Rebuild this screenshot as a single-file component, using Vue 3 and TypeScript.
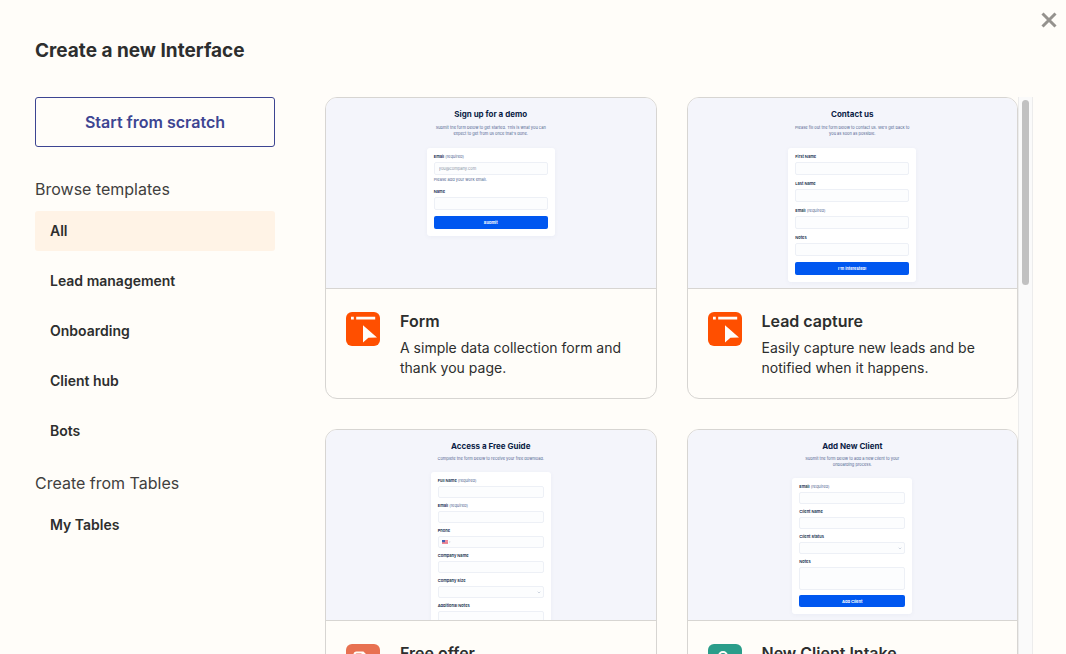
<script setup lang="ts">
import { ref } from 'vue'

type FieldKind = 'text' | 'phone' | 'select' | 'area'

interface Field {
  label: string
  required?: boolean
  kind?: FieldKind
  placeholder?: string
  help?: string
}

interface Template {
  id: string
  name: string
  description: string
  icon: 'page' | 'offer' | 'client'
  compact?: boolean
  heading: string
  intro: string[]
  fields: Field[]
  submit?: string
}

const categories: string[] = ['All', 'Lead management', 'Onboarding', 'Client hub', 'Bots']
const selected = ref<string>('All')
const thumbShare = ref<number>(33.5)

const templates: Template[] = [
  {
    id: 'form',
    name: 'Form',
    description: 'A simple data collection form and thank you page.',
    icon: 'page',
    heading: 'Sign up for a demo',
    intro: ['Submit the form below to get started. This is what you can', "expect to get from us once that's done."],
    fields: [
      { label: 'Email', required: true, placeholder: 'you@company.com', help: 'Please add your work email.' },
      { label: 'Name' },
    ],
    submit: 'Submit',
  },
  {
    id: 'lead',
    name: 'Lead capture',
    description: 'Easily capture new leads and be notified when it happens.',
    icon: 'page',
    heading: 'Contact us',
    intro: ["Please fill out the form below to contact us. We'll get back to", 'you as soon as possible.'],
    fields: [{ label: 'First Name' }, { label: 'Last Name' }, { label: 'Email', required: true }, { label: 'Notes' }],
    submit: "I'm interested!",
  },
  {
    id: 'offer',
    name: 'Free offer',
    description: '',
    icon: 'offer',
    compact: true,
    heading: 'Access a Free Guide',
    intro: ['Complete the form below to receive your free download.'],
    fields: [
      { label: 'Full Name', required: true },
      { label: 'Email', required: true },
      { label: 'Phone', kind: 'phone' },
      { label: 'Company Name' },
      { label: 'Company Size', kind: 'select' },
      { label: 'Additional Notes' },
    ],
  },
  {
    id: 'intake',
    name: 'New Client Intake',
    description: '',
    icon: 'client',
    compact: true,
    heading: 'Add New Client',
    intro: ['Submit the form below to add a new client to your', 'onboarding process.'],
    fields: [
      { label: 'Email', required: true },
      { label: 'Client Name' },
      { label: 'Client Status', kind: 'select' },
      { label: 'Notes', kind: 'area' },
    ],
    submit: 'Add Client',
  },
]
</script>

<template>
  <main class="dialog">
    <button class="close" type="button" aria-label="Close">
      <svg viewBox="0 0 16 16" width="16" height="16" aria-hidden="true">
        <path d="M1.5 1.5 14.5 14.5M14.5 1.5 1.5 14.5" fill="none" stroke="#95928e" stroke-width="3" />
      </svg>
    </button>
    <h1>Create a new Interface</h1>
    <div class="body">
      <nav class="sidebar">
        <button class="scratch" type="button">Start from scratch</button>
        <h2>Browse templates</h2>
        <ul>
          <li v-for="c in categories" :key="c">
            <button class="item" :class="{ active: c === selected }" type="button" @click="selected = c">{{ c }}</button>
          </li>
        </ul>
        <h2 class="second">Create from Tables</h2>
        <ul>
          <li><button class="item" type="button">My Tables</button></li>
        </ul>
      </nav>

      <section class="scroller">
        <div class="grid">
          <article v-for="t in templates" :key="t.id" class="card">
            <div class="preview" :class="{ compact: t.compact }">
              <h4>{{ t.heading }}</h4>
              <p class="intro"><span v-for="line in t.intro" :key="line">{{ line }}</span></p>
              <form class="mini" @submit.prevent>
                <div v-for="(f, i) in t.fields" :key="f.label" class="field">
                  <label :for="`${t.id}-${i}`">{{ f.label }} <span v-if="f.required">(required)</span></label>
                  <textarea v-if="f.kind === 'area'" :id="`${t.id}-${i}`" tabindex="-1"></textarea>
                  <div v-else-if="f.kind === 'select'" class="wrap">
                    <select :id="`${t.id}-${i}`" tabindex="-1"><option></option></select>
                    <svg class="chevron" viewBox="0 0 4 3" width="4" height="3" aria-hidden="true">
                      <path d="M.7.7 2 2 3.3.7" fill="none" stroke="#a3aec4" stroke-width=".5" />
                    </svg>
                  </div>
                  <div v-else-if="f.kind === 'phone'" class="wrap">
                    <input :id="`${t.id}-${i}`" type="tel" tabindex="-1" />
                    <svg class="flag" viewBox="0 0 9 4" width="9" height="4" aria-hidden="true">
                      <path d="M0 0h6v4H0z" fill="#f3a2ad" />
                      <path d="M0 .8h6M0 2.4h6M0 3.8h6" stroke="#e45b70" stroke-width=".5" />
                      <path d="M0 0h3v2.2H0z" fill="#4261b5" />
                      <path d="M7 1.8h1.5L7.8 2.5z" fill="#8c99b3" />
                    </svg>
                  </div>
                  <input v-else :id="`${t.id}-${i}`" type="text" :placeholder="f.placeholder" tabindex="-1" />
                  <p v-if="f.help" class="help">{{ f.help }}</p>
                </div>
                <button v-if="t.submit" class="submit" type="submit" tabindex="-1">{{ t.submit }}</button>
              </form>
            </div>
            <div class="info">
              <svg v-if="t.icon === 'page'" class="icon" viewBox="0 0 34 34" aria-hidden="true">
                <rect width="34" height="34" rx="6" fill="#ff4f00" />
                <path d="M5 4.8h2.8v2.8H5zM10.2 4.8H29.2v2.8H10.2z" fill="#fffdf9" />
                <path d="M17 13.2 31 25.4 22.4 25.8 17 30.4z" fill="#fffdf9" />
              </svg>
              <svg v-else-if="t.icon === 'offer'" class="icon" viewBox="0 0 34 34" aria-hidden="true">
                <rect width="34" height="34" rx="6" fill="#e87151" />
                <path d="M8.5 25V10.5a2 2 0 0 1 2-2H17l3.5 3.5V25zM16.5 8.5V12.5H20.5" fill="none" stroke="#fffdf9" stroke-width="2" />
              </svg>
              <svg v-else class="icon" viewBox="0 0 34 34" aria-hidden="true">
                <rect width="34" height="34" rx="6" fill="#2a9d8a" />
                <circle cx="15" cy="12" r="4" fill="none" stroke="#fffdf9" stroke-width="2" />
                <path d="M7 26c0-5 3-8 8-8s8 3 8 8" fill="none" stroke="#fffdf9" stroke-width="2" />
              </svg>
              <div class="copy">
                <h3>{{ t.name }}</h3>
                <p v-if="t.description">{{ t.description }}</p>
              </div>
            </div>
          </article>
        </div>
        <div class="track" aria-hidden="true"><div class="thumb" :style="{ height: thumbShare + '%' }"></div></div>
      </section>
    </div>
  </main>
</template>

<style>
body {
  background: #fffdf9;
  overflow: hidden;
}
</style>

<style scoped>
* {
  box-sizing: border-box;
  margin: 0;
}
button,
input,
textarea,
select {
  font-family: inherit;
  padding: 0;
  border-radius: 0;
}
button {
  cursor: pointer;
}
.dialog {
  position: relative;
  display: flex;
  flex-direction: column;
  height: 100vh;
  padding: 36px 33px 0 35px;
  overflow: hidden;
  background: #fffdf9;
  color: #2d2e2e;
  font-family: Inter, 'Liberation Sans', sans-serif;
}
.close {
  position: absolute;
  top: 12px;
  right: 9px;
  width: 16px;
  height: 16px;
  border: 0;
  background: none;
}
.close svg {
  display: block;
}
h1 {
  font-size: 19px;
  line-height: 30px;
  font-weight: 700;
}
.body {
  display: flex;
  flex: 1;
  gap: 50px;
  min-height: 0;
  margin-top: 31px;
}
.sidebar {
  flex: 0 0 240px;
}
.scratch {
  display: block;
  width: 100%;
  height: 50px;
  border: 1px solid #3d4592;
  border-radius: 3px;
  background: none;
  color: #3d4592;
  font-size: 16px;
  font-weight: 600;
}
h2 {
  margin-top: 30px;
  font-size: 16px;
  line-height: 24px;
  font-weight: 400;
  color: #413f3e;
}
h2.second {
  margin-top: 20px;
}
ul {
  display: flex;
  flex-direction: column;
  gap: 10px;
  margin-top: 10px;
  padding: 0;
  list-style: none;
}
.item {
  display: block;
  width: 100%;
  height: 40px;
  padding: 0 15px 2px;
  border: 0;
  border-radius: 3px;
  background: none;
  color: #2d2e2e;
  font-size: 14px;
  font-weight: 600;
  text-align: left;
}
.item.active {
  background: #fff3e6;
}
.scroller {
  display: flex;
  flex: 1;
  min-width: 0;
  overflow: hidden;
}
.grid {
  display: grid;
  flex: 1;
  grid-template-columns: repeat(2, minmax(0, 1fr));
  grid-auto-rows: max-content;
  align-content: start;
  gap: 30px;
}
.card {
  min-height: 302px;
  overflow: hidden;
  border: 1px solid #d7d5d2;
  border-radius: 12px;
}
.preview {
  display: flex;
  flex-direction: column;
  align-items: center;
  height: 191px;
  padding-top: 10px;
  overflow: hidden;
  border-bottom: 1px solid #d7d5d2;
  background: #f4f5fb;
  color: #0b1d45;
}
h4 {
  font-size: 8px;
  line-height: 12px;
  font-weight: 700;
}
.intro {
  display: flex;
  flex-direction: column;
  margin: 5px 0 11px;
  color: #50648f;
  font-size: 4px;
  line-height: 6px;
  text-align: center;
}
.mini {
  display: flex;
  flex: none;
  flex-direction: column;
  gap: 6px;
  width: 128px;
  padding: 6px 7px 7px;
  border-radius: 3px;
  background: #fff;
  box-shadow: 0 1px 4px rgba(60, 80, 140, 0.05);
}
.compact .intro {
  margin: 4px 0 10px;
}
.compact .mini {
  gap: 5px;
  width: 120px;
}
.field {
  display: flex;
  flex-direction: column;
  gap: 2px;
}
label {
  font-size: 4px;
  line-height: 6px;
  font-weight: 600;
}
label span {
  font-weight: 400;
  color: #50648f;
}
.help {
  color: #50648f;
  font-size: 4px;
  line-height: 6px;
}
.wrap {
  position: relative;
  display: flex;
}
input,
select,
textarea {
  display: block;
  width: 100%;
  height: 13px;
  padding: 0 4px;
  border: 1px solid #edf0f6;
  border-radius: 2px;
  background: #fcfdfe;
  font-size: 4px;
  appearance: none;
}
.compact input,
.compact select,
.compact .submit {
  height: 12px;
}
.compact textarea {
  height: 23px;
  resize: none;
}
input::placeholder {
  color: #8a93a5;
}
.chevron {
  position: absolute;
  top: 5px;
  right: 3px;
}
.flag {
  position: absolute;
  top: 4px;
  left: 4px;
}
.submit {
  height: 13px;
  border: 0;
  border-radius: 2px;
  background: #0057f0;
  color: #fff;
  font-size: 4px;
  font-weight: 700;
}
.info {
  display: flex;
  gap: 20px;
  padding: 20px;
}
.icon {
  flex: none;
  width: 34px;
  height: 34px;
  margin-top: 3px;
}
h3 {
  font-size: 16px;
  line-height: 24px;
  font-weight: 600;
}
.copy p {
  margin-top: 5px;
  font-size: 14px;
  line-height: 20px;
}
.track {
  flex: none;
  width: 15px;
  padding: 3px;
  border: 1px solid #ececec;
  border-width: 0 1px;
  background: #fafafa;
}
.thumb {
  border-radius: 4px;
  background: #c1c1c1;
}
</style>
